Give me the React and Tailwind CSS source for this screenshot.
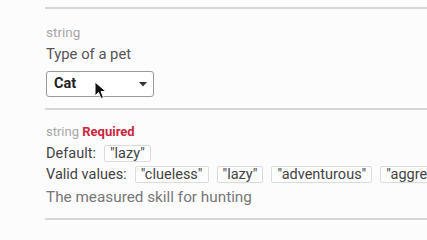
const values = ['"clueless"', '"lazy"', '"adventurous"', '"aggressive"'];

function Chip({ children }) {
  return (
    <span className="inline-flex items-center h-[17px] px-[5px] border border-[#dcdcdc] rounded-[2px] bg-[#fdfdfd] text-[#444] whitespace-nowrap shrink-0">
      {children}
    </span>
  );
}

function Cursor() {
  return (
    <svg className="absolute left-[94px] top-[81px]" width="13" height="20" viewBox="0 0 13 20">
      <path d="M1 1 L1 15 L4.5 11.5 L7 17.5 L9.5 16.5 L7 10.5 L12 10.5 Z" fill="#111" stroke="#fff" strokeWidth="1" strokeLinejoin="round" />
    </svg>
  );
}

export default function App() {
  return (
    <div className="relative w-[427px] h-[240px] overflow-hidden bg-[#fdfcfd] font-['Roboto',sans-serif]">
      <div className="pl-[45px] pt-[7px]">
        <div className="h-[2px] bg-[#d6d6d6]" />

        <div className="pl-px pt-[16px] pb-[11px]">
          <div className="text-[13.5px] leading-[15px] text-[#a8a8a8]">string</div>
          <div className="mt-[6px] text-[14.8px] leading-[17px] text-[#555]">Type of a pet</div>
          <div className="mt-[8px] w-[108px] h-[26px] border border-[#9a9a9a] rounded-[3px] flex items-center justify-between pl-[7px] pr-[6px] bg-white">
            <span className="text-[14.5px] font-bold text-[#222]">Cat</span>
            <svg width="8" height="5" viewBox="0 0 8 5">
              <path d="M0 0 L8 0 L4 4.5 Z" fill="#333" />
            </svg>
          </div>
        </div>

        <div className="h-[2px] bg-[#d6d6d6]" />

        <div className="pl-px pt-[14px] pb-[12px] text-[14.5px] leading-[17px]">
          <div className="text-[13px] leading-[15px]">
            <span className="text-[#a8a8a8]">string</span>{" "}
            <span className="font-bold text-[#c8283d]">Required</span>
          </div>
          <div className="mt-[6px] flex items-center gap-[8px] text-[#444]">
            <span>Default:</span>
            <Chip>"lazy"</Chip>
          </div>
          <div className="mt-[4px] flex items-center gap-[8px] text-[#444] whitespace-nowrap">
            <span>Valid values:</span>
            {values.map((v) => (
              <Chip key={v}>{v}</Chip>
            ))}
          </div>
          <div className="mt-[6px] text-[15.3px] text-[#777]">The measured skill for hunting</div>
        </div>

        <div className="h-[2px] bg-[#d6d6d6]" />
      </div>
      <Cursor />
    </div>
  );
}
